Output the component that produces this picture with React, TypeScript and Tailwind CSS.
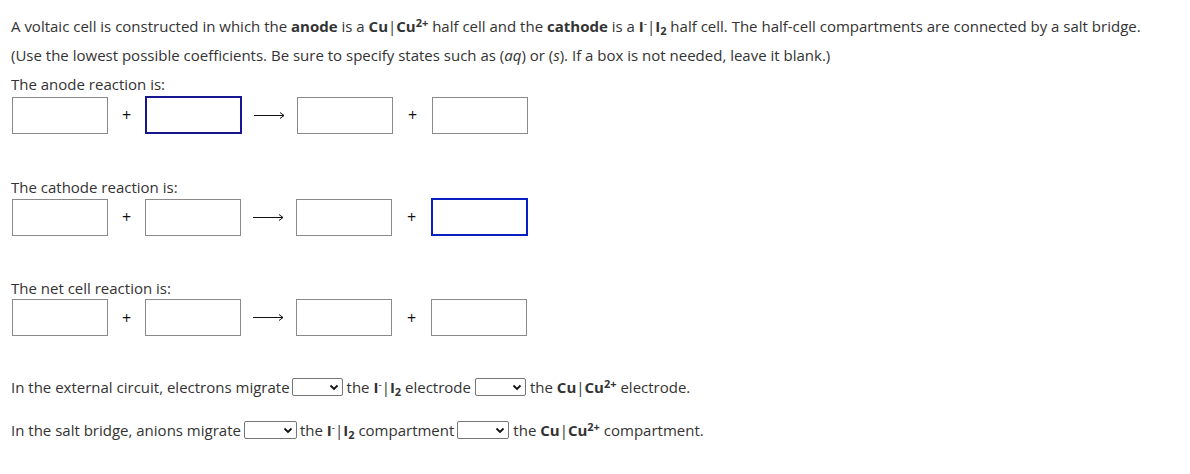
import React from 'react';

const font = { fontFamily: '"Open Sans", "Noto Sans", sans-serif' };

function Box({ active, tone }: { active?: boolean; tone?: 'navy' | 'blue' }) {
  if (active) {
    return (
      <div
        className={
          'w-[97px] h-[38px] border-2 bg-white shrink-0 ' +
          (tone === 'navy' ? 'border-[#16168f]' : 'border-[#0a1fc2]')
        }
      />
    );
  }
  return <div className="w-[96px] h-[37px] border border-[#8a8a8a] bg-white shrink-0" />;
}

function Plus({ w }: { w: string }) {
  return <span className={'text-center text-[16px] text-[#111] shrink-0 ' + w}>+</span>;
}

function Arrow() {
  return (
    <div className="w-[55px] flex justify-center shrink-0">
      <svg width="31" height="9" viewBox="0 0 31 9">
        <line x1="0" y1="4.5" x2="30" y2="4.5" stroke="#111" strokeWidth="1" />
        <path d="M26 1.5 L30 4.5 L26 7.5" fill="none" stroke="#111" strokeWidth="1" />
      </svg>
    </div>
  );
}

function Reaction({ activeIndex, tone }: { activeIndex?: number; tone?: 'navy' | 'blue' }) {
  return (
    <div className="flex items-center pl-[1px]">
      <Box active={activeIndex === 1} tone={tone} />
      <Plus w="w-[37px]" />
      <Box active={activeIndex === 2} tone={tone} />
      <Arrow />
      <Box active={activeIndex === 3} tone={tone} />
      <Plus w="w-[39px]" />
      <Box active={activeIndex === 4} tone={tone} />
    </div>
  );
}

function Dropdown({ w }: { w: string }) {
  return (
    <span className={'inline-flex items-center justify-end h-[18px] border border-[#767676] rounded-[2px] bg-white pr-[3px] align-middle ' + w}>
      <svg width="10" height="7" viewBox="0 0 10 7">
        <path d="M1.5 1.5 L5 5 L8.5 1.5" fill="none" stroke="#111" strokeWidth="1.8" />
      </svg>
    </span>
  );
}

function CuCu() {
  return (
    <span>
      <b>Cu</b>
      <span className="font-normal">|</span>
      <b>
        Cu<sup className="text-[11px]">2+</sup>
      </b>
    </span>
  );
}

function II2() {
  return (
    <span>
      <b>I</b>
      <sup className="text-[10px]">-</sup>
      <span>|</span>
      <b>
        I<sub className="text-[11px]">2</sub>
      </b>
    </span>
  );
}

export default function App() {
  return (
    <div className="bg-white w-[1190px] h-[474px] text-[15px] text-[#333] pl-[11px] pt-[12px]" style={font}>
      <p className="leading-[29px]">
        A voltaic cell is constructed in which the <b>anode</b> is a <CuCu /> half cell and the <b>cathode</b> is a{' '}
        <II2 /> half cell. The half-cell compartments are connected by a salt bridge.
      </p>
      <p className="leading-[29px]">
        (Use the lowest possible coefficients. Be sure to specify states such as (<i>aq</i>) or (<i>s</i>). If a box is
        not needed, leave it blank.)
      </p>

      <p className="leading-[20px] mt-[4px]">The anode reaction is:</p>
      <div className="mt-[2px]">
        <Reaction activeIndex={2} tone="navy" />
      </div>

      <p className="leading-[20px] mt-[43px]">The cathode reaction is:</p>
      <div className="mt-[1px]">
        <Reaction activeIndex={4} tone="blue" />
      </div>

      <p className="leading-[20px] mt-[42px]">The net cell reaction is:</p>
      <div className="mt-[1px]">
        <Reaction />
      </div>

      <div className="mt-[41px] leading-[20px] flex items-center">
        <span>In the external circuit, electrons migrate</span>
        <span className="ml-[2px] flex"><Dropdown w="w-[51px]" /></span>
        <span className="ml-[4px]">
          the <II2 /> electrode
        </span>
        <span className="ml-[4px] flex"><Dropdown w="w-[51px]" /></span>
        <span className="ml-[4px]">
          the <CuCu /> electrode.
        </span>
      </div>

      <div className="mt-[23px] leading-[20px] flex items-center">
        <span>In the salt bridge, anions migrate</span>
        <span className="ml-[3px] flex"><Dropdown w="w-[53px]" /></span>
        <span className="ml-[3px]">
          the <II2 /> compartment
        </span>
        <span className="ml-[3px] flex"><Dropdown w="w-[52px]" /></span>
        <span className="ml-[4px]">
          the <CuCu /> compartment.
        </span>
      </div>
    </div>
  );
}
